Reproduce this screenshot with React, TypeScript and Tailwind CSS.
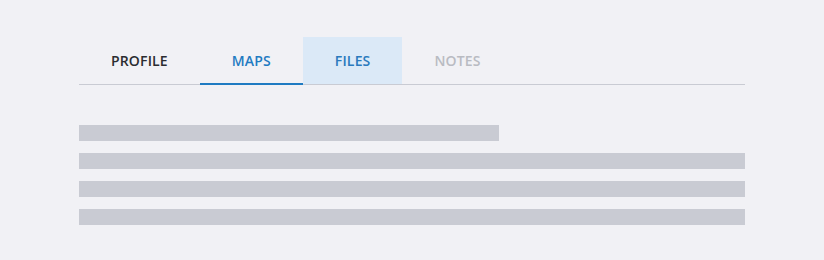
import React from 'react';

const tabs = [
  { label: 'Profile', state: 'default' },
  { label: 'Maps', state: 'active' },
  { label: 'Files', state: 'hover' },
  { label: 'Notes', state: 'disabled' },
];

const tabClass: Record<string, string> = {
  default: 'h-[47px] text-[#2b2c30]',
  active: 'h-[48px] -mb-px border-b-2 border-[#1f7bc2] text-[#1f7bc2]',
  hover: 'h-[47px] bg-[#dbe9f7] text-[#2a79bd]',
  disabled: 'h-[47px] text-[#b9bbc2]',
};

export default function App() {
  return (
    <div
      className="w-[824px] h-[260px] bg-[#f1f1f5] pt-[37px] px-[79px]"
      style={{ fontFamily: '"Open Sans", "Liberation Sans", sans-serif' }}
    >
      <div className="flex border-b border-[#c9cbd3]">
        {tabs.map((t) => (
          <div
            key={t.label}
            className={`flex items-center px-8 text-[14px] font-semibold tracking-[0.15px] uppercase ${tabClass[t.state]}`}
          >
            {t.label}
          </div>
        ))}
      </div>

      <div className="mt-10 flex flex-col gap-3">
        <div className="h-4 w-[420px] bg-[#c9cbd3]" />
        <div className="h-4 w-full bg-[#c9cbd3]" />
        <div className="h-4 w-full bg-[#c9cbd3]" />
        <div className="h-4 w-full bg-[#c9cbd3]" />
      </div>
    </div>
  );
}
